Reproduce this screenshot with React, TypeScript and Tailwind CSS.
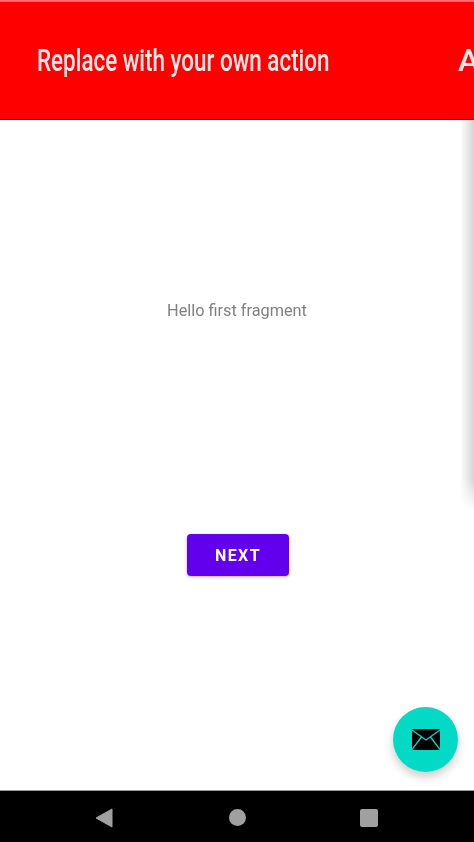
function MailIcon() {
  return (
    <svg viewBox="0 0 28 21" className="h-[21px] w-[28px] blur-[0.3px]">
      <rect width="28" height="21" rx="1" fill="#000" />
      <path d="M0 1 L14 11 L28 1 M0 20.5 L9.5 8 M28 20.5 L18.5 8" fill="none" stroke="#03dac5" strokeWidth="1.3" />
    </svg>
  )
}

function NavBar() {
  return (
    <nav className="flex h-[52px] shrink-0 items-center border-t border-[#9a9a9a] bg-black pt-[2px] pl-[95px]">
      <svg viewBox="0 0 18 20" className="h-[20px] w-[18px]" fill="#a0a0a0">
        <path d="M17 1 L1 10 L17 19 Z" strokeLinejoin="round" stroke="#a0a0a0" strokeWidth="1" />
      </svg>
      <div className="ml-[116px] h-[17px] w-[17px] rounded-full bg-[#a0a0a0]" />
      <div className="ml-[114px] h-[18px] w-[18px] rounded-[2px] bg-[#a0a0a0]" />
    </nav>
  )
}

export default function App() {
  return (
    <div className="relative flex h-[842px] w-[474px] flex-col overflow-hidden bg-white font-['Roboto',sans-serif]">
      <header className="flex h-[120px] shrink-0 flex-col border-b border-[#a80000] bg-[#ff0000]">
        <div className="h-[2px] bg-[#ff6a6a]" />
        <div className="flex flex-1 items-center overflow-hidden pb-[2px] pl-[37px] text-[32px] leading-none font-medium whitespace-nowrap text-[#ffe8e8] blur-[0.6px]">
          <span className="w-[421px] shrink-0 origin-left scale-x-[0.7]">Replace with your own action</span>
          <span>A</span>
        </div>
      </header>

      <main className="relative flex flex-1 flex-col items-center">
        <p className="mt-[180px] text-[16.3px] leading-[22px] text-[#808080] blur-[0.3px]">Hello first fragment</p>
        <button className="mt-[212px] ml-[2px] flex h-[42px] w-[102px] items-center justify-center rounded-[4px] bg-[#6200ee] pt-[2px] text-[16px] font-bold tracking-[1.4px] text-white shadow-[0_1px_3px_rgba(98,0,238,0.35)]">
          <span className="blur-[0.3px]">NEXT</span>
        </button>

        <div className="absolute top-0 right-0 h-[390px] w-[14px] bg-gradient-to-r from-transparent to-[#d4d4d4] [mask-image:linear-gradient(to_bottom,black_92%,transparent)]" />

        <button className="absolute right-[16px] bottom-[18px] flex h-[65px] w-[65px] items-center justify-center rounded-full bg-[#03dac5] shadow-[0_5px_10px_rgba(0,0,0,0.2)]">
          <MailIcon />
        </button>
      </main>

      <NavBar />
    </div>
  )
}
